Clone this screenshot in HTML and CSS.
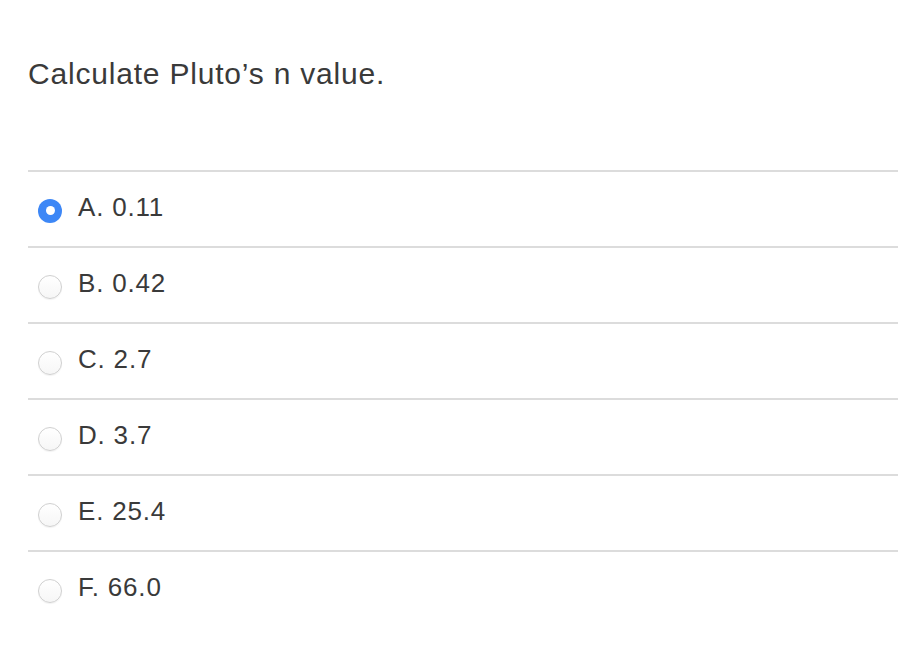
FILE: index.html
```html
<!DOCTYPE html>
<html>
<head>
<meta charset="utf-8">
<link rel="stylesheet" href="styles.css">
</head>
<body>
<div class="question">
  <h1 class="prompt">Calculate Pluto’s n value.</h1>
  <ul class="options">
    <li class="option"><span class="radio checked"></span><span class="label">A. 0.11</span></li>
    <li class="option"><span class="radio"></span><span class="label">B. 0.42</span></li>
    <li class="option"><span class="radio"></span><span class="label">C. 2.7</span></li>
    <li class="option"><span class="radio"></span><span class="label">D. 3.7</span></li>
    <li class="option"><span class="radio"></span><span class="label">E. 25.4</span></li>
    <li class="option"><span class="radio"></span><span class="label">F. 66.0</span></li>
  </ul>
</div>
</body>
</html>
```
FILE: styles.css
```css
html, body {
  margin: 0;
  padding: 0;
  background: #fff;
}
body {
  font-family: "Liberation Sans", Arial, sans-serif;
  color: #333;
}
.question {
  padding: 56px 16px 0 28px;
}
.prompt {
  margin: 0;
  font-size: 30px;
  letter-spacing: 0.8px;
  font-weight: normal;
  line-height: 36px;
  color: #3a3a3a;
}
.options {
  list-style: none;
  margin: 78px 0 0;
  padding: 0;
}
.option {
  display: flex;
  align-items: center;
  gap: 16px;
  height: 74px;
  padding-left: 10px;
  border-top: 2px solid #dcdcdc;
}
.radio {
  box-sizing: border-box;
  width: 24px;
  height: 24px;
  margin-top: 3px;
  border-radius: 50%;
  border: 1px solid #d0d0d0;
  background: linear-gradient(#fff, #f6f6f6);
  box-shadow: 0 1px 1px rgba(0,0,0,0.05);
  position: relative;
}
.radio.checked {
  border: none;
  background: #3d87f6;
  box-shadow: none;
}
.radio.checked::after {
  content: "";
  position: absolute;
  left: 7.5px;
  top: 7.5px;
  width: 9px;
  height: 9px;
  border-radius: 50%;
  background: #fff;
}
.label {
  font-size: 26px;
  letter-spacing: 0.8px;
  line-height: 30px;
  padding-bottom: 4px;
  color: #3a3a3a;
}
```
